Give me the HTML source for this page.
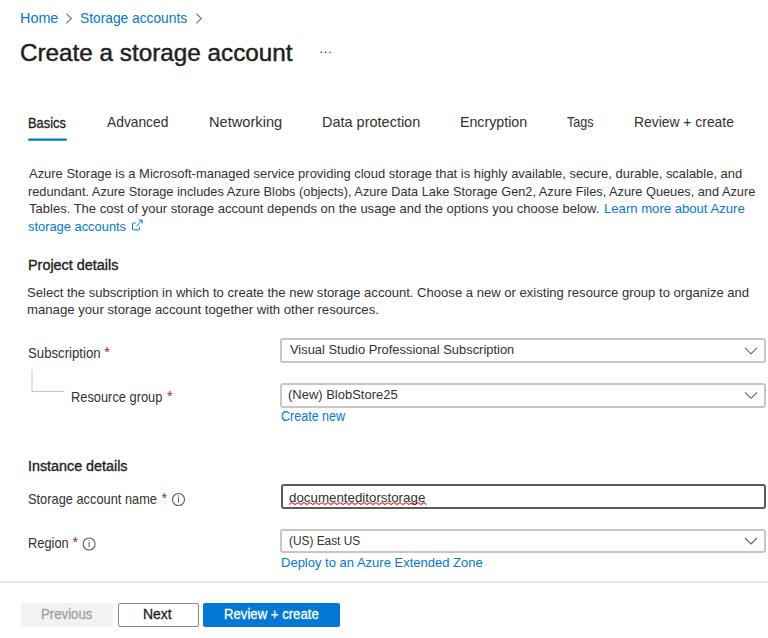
<!DOCTYPE html>
<html><head><meta charset="utf-8"><title>Create a storage account</title>
<style>
html,body{margin:0;padding:0;background:#fff;width:768px;height:638px;overflow:hidden;position:relative}
.t{position:absolute;font-family:"Liberation Sans",sans-serif;line-height:1;white-space:pre;transform-origin:0 0}
.box{position:absolute;box-sizing:border-box;background:#fff}
.dd{border:2px solid #c8c6c4;border-radius:3px}
svg{position:absolute;overflow:visible}
</style></head><body>
<!-- breadcrumb chevrons -->
<svg style="left:0;top:0" width="768" height="638">
 <path d="M66.3 13.6 L71.4 18.5 L66.3 23.3" fill="none" stroke="#797775" stroke-width="1.1"/>
 <path d="M196.3 13.6 L201.4 18.5 L196.3 23.3" fill="none" stroke="#797775" stroke-width="1.1"/>
 <!-- more dots -->
 <circle cx="321.2" cy="52.3" r="0.8" fill="#323130"/>
 <circle cx="325.6" cy="52.3" r="0.8" fill="#323130"/>
 <circle cx="330" cy="52.3" r="0.8" fill="#323130"/>
 <!-- tab underline -->
 <rect x="28" y="138.5" width="39" height="2.2" rx="1" fill="#0078d4"/>
 <!-- external link icon -->
 <path d="M135.6 223 H133.4 Q132.5 223 132.5 223.9 V229 Q132.5 229.9 133.4 229.9 H138.5 Q139.4 229.9 139.4 229 V226.8" fill="none" stroke="#0078d4" stroke-width="1"/>
 <path d="M136.6 226.4 L141.8 220.4 M138.6 220.1 H142.1 V223.6" fill="none" stroke="#0078d4" stroke-width="1"/>
 <!-- tree connector -->
 <path d="M32 369.5 V391.5 H64.5" fill="none" stroke="#c8c6c4" stroke-width="1"/>
 <!-- info icons -->
 <circle cx="178.5" cy="499.5" r="6" fill="none" stroke="#605e5c" stroke-width="1.1"/>
 <path d="M178.5 497.5 V502.6" stroke="#605e5c" stroke-width="1.1"/>
 <circle cx="178.5" cy="495.9" r="0.6" fill="#605e5c"/>
 <circle cx="89.1" cy="544" r="6" fill="none" stroke="#605e5c" stroke-width="1.1"/>
 <path d="M89.1 542 V547.1" stroke="#605e5c" stroke-width="1.1"/>
 <circle cx="89.1" cy="540.4" r="0.6" fill="#605e5c"/>
</svg>
<!-- dropdowns -->
<div class="box dd" style="left:280px;top:338px;width:486px;height:25px"></div>
<div class="box dd" style="left:280px;top:383px;width:486px;height:25px"></div>
<div class="box" style="left:280.5px;top:483.5px;width:485.5px;height:25.5px;border:2.2px solid #5c5b5a;border-radius:3px"></div>
<div class="box dd" style="left:280px;top:529px;width:486px;height:24px"></div>
<svg style="left:0;top:0" width="768" height="638">
 <path d="M745 347.8 L751 353.8 L757 347.8" fill="none" stroke="#605e5c" stroke-width="1.1"/>
 <path d="M745 392.3 L751 398.3 L757 392.3" fill="none" stroke="#605e5c" stroke-width="1.1"/>
 <path d="M745 538 L751 544 L757 538" fill="none" stroke="#605e5c" stroke-width="1.1"/>
 <!-- squiggle -->
 <path id="sq" d="M289 504.6 L292.0 502.6 L295.0 504.6 L298.0 502.6 L301.0 504.6 L304.0 502.6 L307.0 504.6 L310.0 502.6 L313.0 504.6 L316.0 502.6 L319.0 504.6 L322.0 502.6 L325.0 504.6 L328.0 502.6 L331.0 504.6 L334.0 502.6 L337.0 504.6 L340.0 502.6 L343.0 504.6 L346.0 502.6 L349.0 504.6 L352.0 502.6 L355.0 504.6 L358.0 502.6 L361.0 504.6 L364.0 502.6 L367.0 504.6 L370.0 502.6 L373.0 504.6 L376.0 502.6 L379.0 504.6 L382.0 502.6 L385.0 504.6 L388.0 502.6 L391.0 504.6 L394.0 502.6 L397.0 504.6 L400.0 502.6 L403.0 504.6 L406.0 502.6 L409.0 504.6 L412.0 502.6 L415.0 504.6 L418.0 502.6 L421.0 504.6 L424.0 502.6 L426.5 504.6" fill="none" stroke="#eb3340" stroke-width="1.2"/>
</svg>
<!-- separator -->
<div class="box" style="left:0;top:581px;width:768px;height:2px;background:#e8e6e4"></div>
<!-- buttons -->
<div class="box" style="left:20.5px;top:602.5px;width:92px;height:24px;background:#f3f2f1;border-radius:2px"></div>
<div class="box" style="left:117.5px;top:602.5px;width:81px;height:24px;border:1px solid #8a8886;border-radius:2px"></div>
<div class="box" style="left:203px;top:602.5px;width:137px;height:24px;background:#0078d4;border-radius:2px"></div>
<div class="t" style="left:19.71px;top:11.00px;font-size:14.5px;color:#0078d4;transform:scaleX(0.9919);">Home</div>
<div class="t" style="left:79.65px;top:11.00px;font-size:14.5px;color:#0078d4;transform:scaleX(0.9491);">Storage accounts</div>
<div class="t" style="left:20.00px;top:41.00px;font-size:24.3px;color:#201f1e;-webkit-text-stroke:0.45px #201f1e;transform:scaleX(0.9989);">Create a storage account</div>
<div class="t" style="left:28.10px;top:116.00px;font-size:14.3px;color:#201f1e;-webkit-text-stroke:0.3px #201f1e;transform:scaleX(0.9024);">Basics</div>
<div class="t" style="left:107.20px;top:115.00px;font-size:14.5px;color:#323130;transform:scaleX(0.9516);">Advanced</div>
<div class="t" style="left:208.79px;top:115.00px;font-size:14.5px;color:#323130;transform:scaleX(1.0085);">Networking</div>
<div class="t" style="left:322.00px;top:115.00px;font-size:14.5px;color:#323130;transform:scaleX(0.9990);">Data protection</div>
<div class="t" style="left:460.02px;top:115.00px;font-size:14.5px;color:#323130;transform:scaleX(0.9791);">Encryption</div>
<div class="t" style="left:567.40px;top:115.00px;font-size:14.5px;color:#323130;transform:scaleX(0.8710);">Tags</div>
<div class="t" style="left:634.04px;top:115.00px;font-size:14.5px;color:#323130;transform:scaleX(0.9573);">Review + create</div>
<div class="t" style="left:28.50px;top:167.00px;font-size:13.0px;color:#323130;transform:scaleX(0.9959);">Azure Storage is a Microsoft-managed service providing cloud storage that is highly available, secure, durable, scalable, and</div>
<div class="t" style="left:27.52px;top:185.00px;font-size:13.0px;color:#323130;transform:scaleX(0.9818);">redundant. Azure Storage includes Azure Blobs (objects), Azure Data Lake Storage Gen2, Azure Files, Azure Queues, and Azure</div>
<div class="t" style="left:28.50px;top:202.00px;font-size:13.0px;color:#323130;transform:scaleX(1.0019);">Tables. The cost of your storage account depends on the usage and the options you choose below.</div>
<div class="t" style="left:603.79px;top:202.00px;font-size:13.0px;color:#0078d4;transform:scaleX(1.0087);">Learn more about Azure</div>
<div class="t" style="left:28.20px;top:220.00px;font-size:13.0px;color:#0078d4;transform:scaleX(0.9904);">storage accounts</div>
<div class="t" style="left:27.97px;top:258.00px;font-size:14px;color:#201f1e;-webkit-text-stroke:0.35px #201f1e;transform:scaleX(1.0276);">Project details</div>
<div class="t" style="left:27.49px;top:286.00px;font-size:13.0px;color:#323130;transform:scaleX(1.0053);">Select the subscription in which to create the new storage account. Choose a new or existing resource group to organize and</div>
<div class="t" style="left:27.49px;top:303.00px;font-size:13.0px;color:#323130;transform:scaleX(1.0124);">manage your storage account together with other resources.</div>
<div class="t" style="left:27.56px;top:346.00px;font-size:14.1px;color:#323130;transform:scaleX(0.9368);">Subscription</div>
<div class="t" style="left:104.30px;top:345.00px;font-size:14.5px;color:#a4262c;">*</div>
<div class="t" style="left:71.09px;top:390.00px;font-size:14.1px;color:#323130;transform:scaleX(0.9111);">Resource group</div>
<div class="t" style="left:167.00px;top:389.00px;font-size:14.5px;color:#a4262c;">*</div>
<div class="t" style="left:289.60px;top:343.00px;font-size:13.7px;color:#323130;transform:scaleX(0.9426);">Visual Studio Professional Subscription</div>
<div class="t" style="left:287.95px;top:388.00px;font-size:13.7px;color:#323130;transform:scaleX(0.9482);">(New) BlobStore25</div>
<div class="t" style="left:280.70px;top:410.00px;font-size:13.8px;color:#0078d4;transform:scaleX(0.9085);">Create new</div>
<div class="t" style="left:27.88px;top:459.00px;font-size:14px;color:#201f1e;-webkit-text-stroke:0.35px #201f1e;transform:scaleX(1.0229);">Instance details</div>
<div class="t" style="left:27.99px;top:492.00px;font-size:14.1px;color:#323130;transform:scaleX(0.9092);">Storage account name</div>
<div class="t" style="left:161.60px;top:491.00px;font-size:14.5px;color:#a4262c;">*</div>
<div class="t" style="left:289.40px;top:491.00px;font-size:13.2px;color:#323130;transform:scaleX(1.0104);">documenteditorstorage</div>
<div class="t" style="left:27.99px;top:536.00px;font-size:14.1px;color:#323130;transform:scaleX(0.9116);">Region</div>
<div class="t" style="left:72.40px;top:535.00px;font-size:14.5px;color:#a4262c;">*</div>
<div class="t" style="left:288.73px;top:534.00px;font-size:13.7px;color:#323130;transform:scaleX(0.8667);">(US) East US</div>
<div class="t" style="left:281.23px;top:556.00px;font-size:13.4px;color:#0078d4;transform:scaleX(0.9714);">Deploy to an Azure Extended Zone</div>
<div class="t" style="left:40.55px;top:608.00px;font-size:13.9px;color:#a19f9d;-webkit-text-stroke:0.3px #a19f9d;transform:scaleX(0.9509);">Previous</div>
<div class="t" style="left:143.20px;top:608.00px;font-size:13.9px;color:#201f1e;-webkit-text-stroke:0.3px #201f1e;transform:scaleX(1.0036);">Next</div>
<div class="t" style="left:224.15px;top:608.00px;font-size:13.9px;color:#ffffff;-webkit-text-stroke:0.3px #ffffff;transform:scaleX(0.9475);">Review + create</div>
</body></html>
